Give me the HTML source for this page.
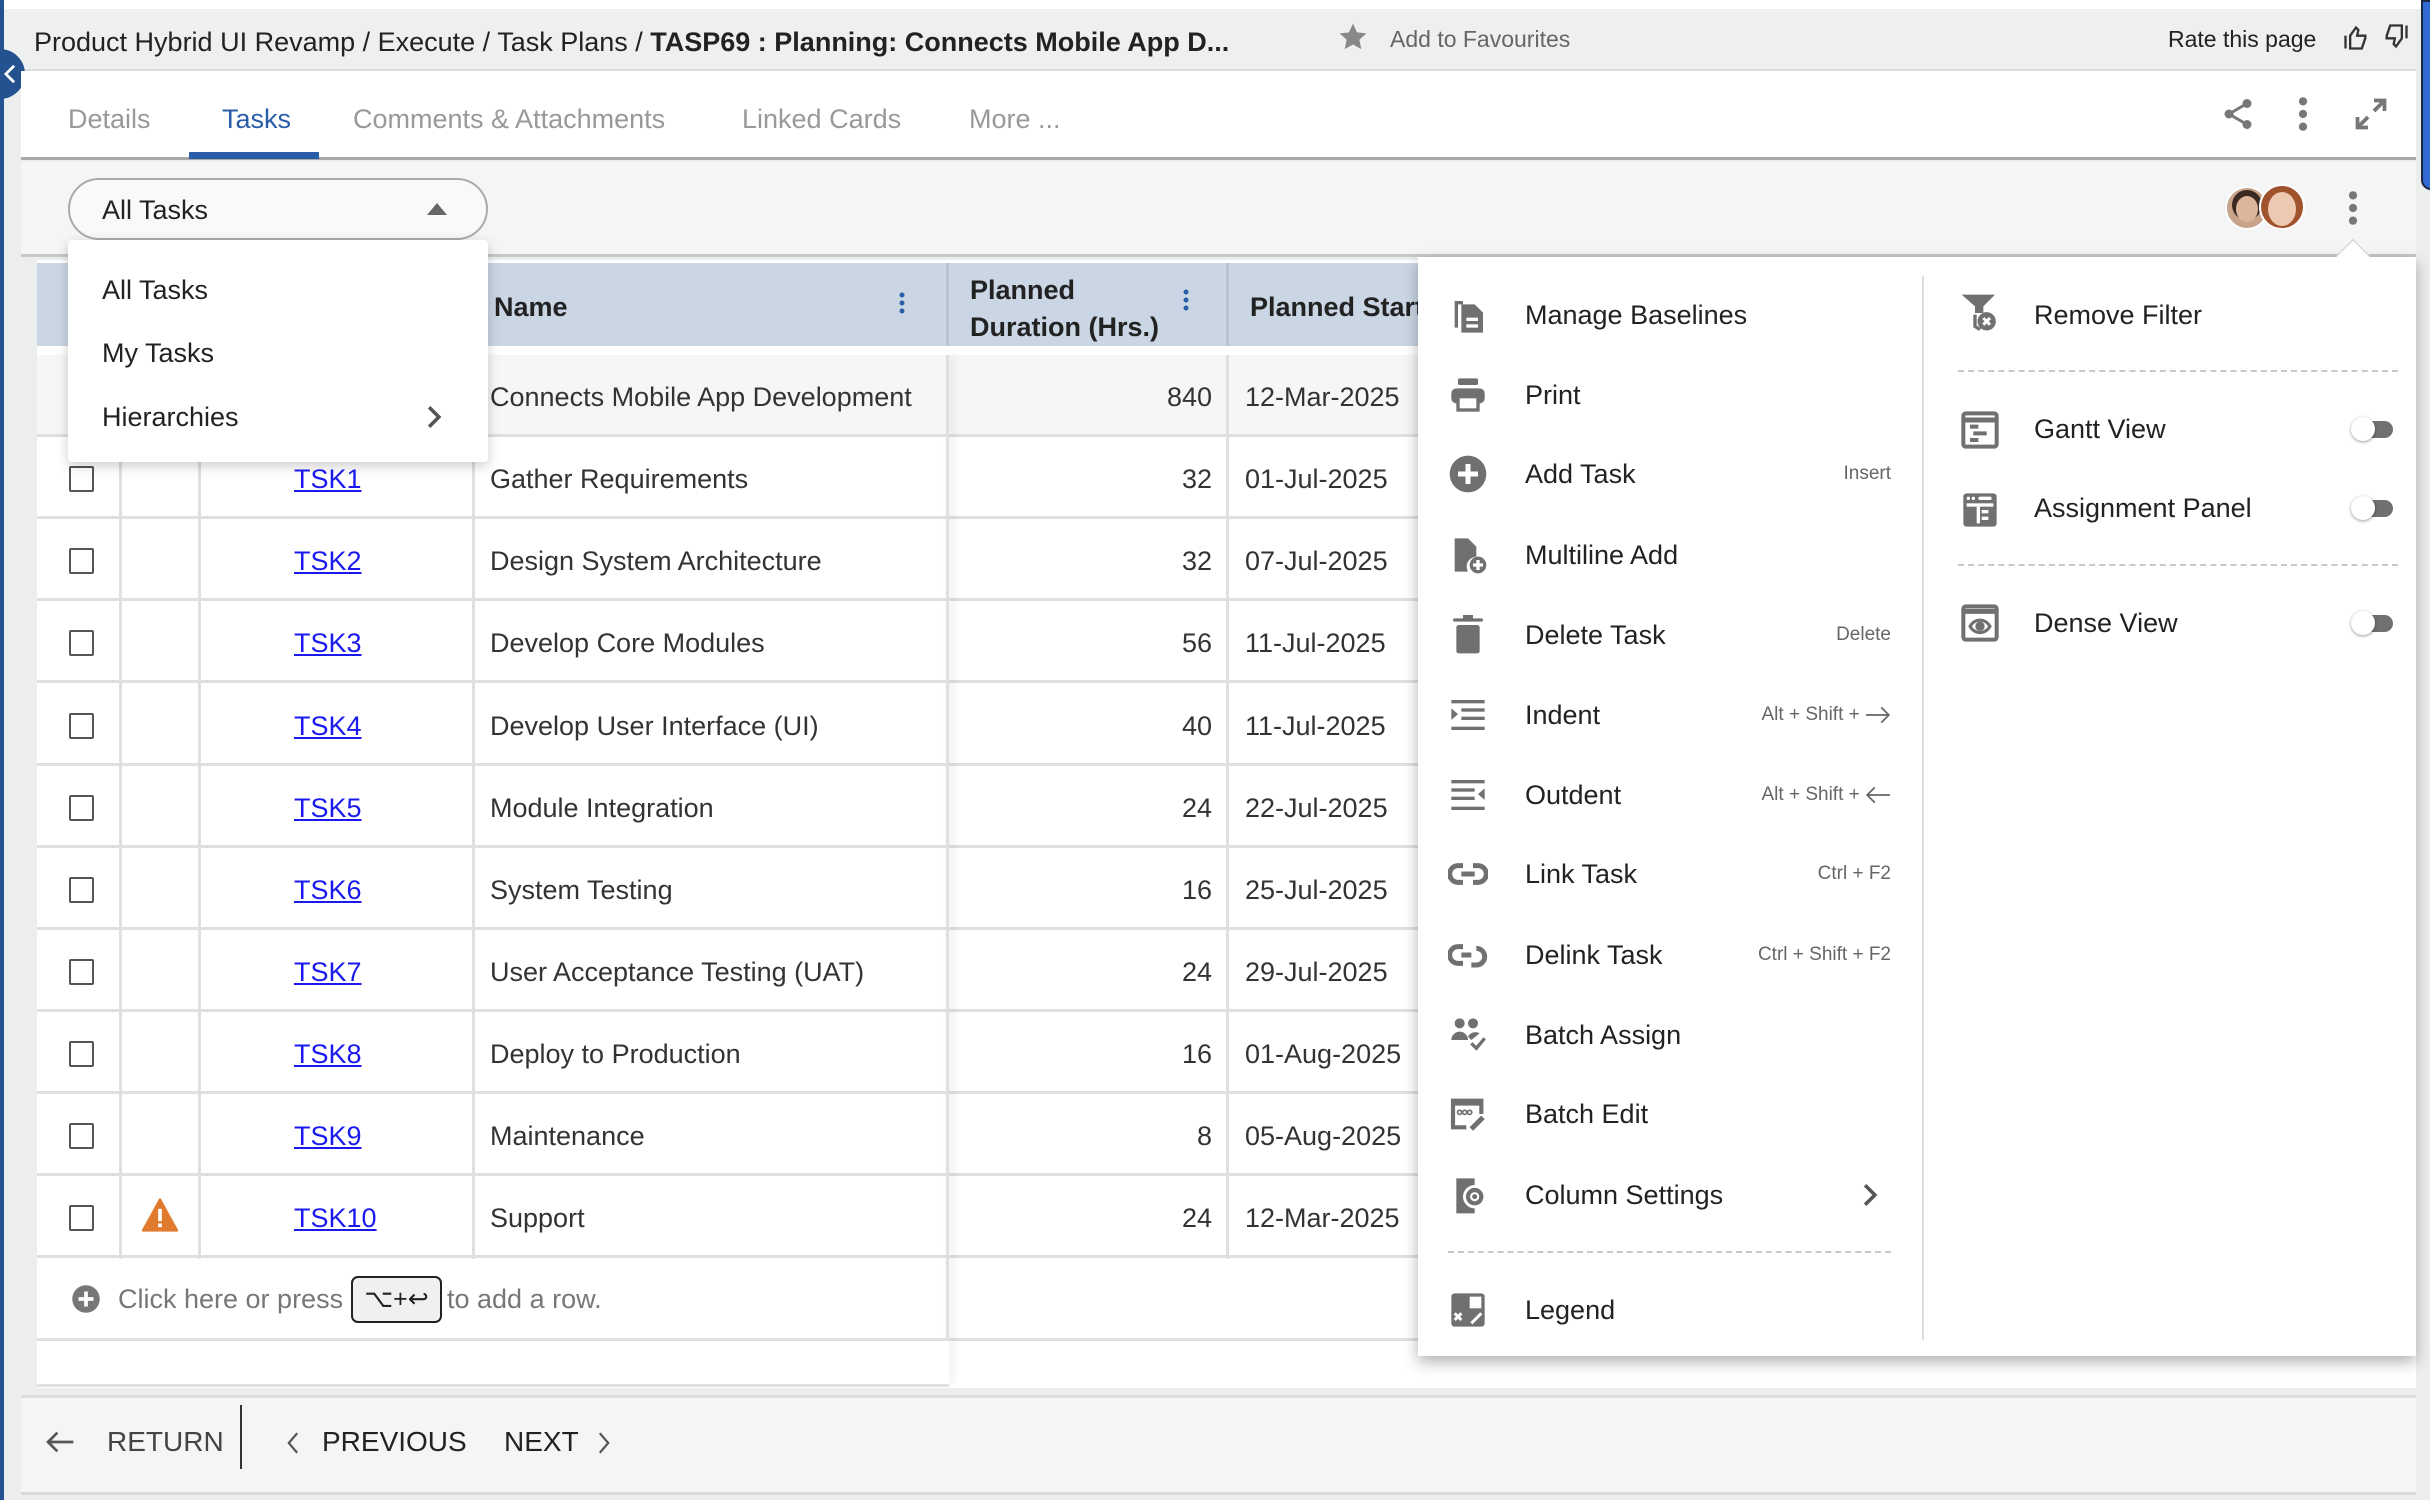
<!DOCTYPE html>
<html><head><meta charset="utf-8">
<style>
*{margin:0;padding:0;box-sizing:border-box}
body{width:2430px;height:1500px;position:relative;overflow:hidden;background:#eceeee;font-family:"Liberation Sans",sans-serif;color:#222}
.a{position:absolute}
.t{position:absolute;height:40px;line-height:40px;white-space:nowrap}
.row{position:absolute;left:37px;width:2379px;height:82px;border-bottom:3px solid #e0e0e3;background:#fff}
.cb{position:absolute;left:69px;width:25px;height:26px;border:2px solid #555;border-radius:2px;background:#fff}
.lk{color:#1a1aee;text-decoration:underline;font-size:27px}
.mi{position:absolute;font-size:27px;color:#222;height:40px;line-height:40px}
.sc{position:absolute;font-size:19px;color:#666;right:0;height:40px;line-height:40px;text-align:right;white-space:nowrap}
.sc svg{vertical-align:middle}
.ic{position:absolute;width:40px;height:40px}
.tg{position:absolute;width:42px;height:20px}
.tg:before{content:"";position:absolute;left:10px;top:2px;width:32px;height:17px;border-radius:9px;background:#707070}
.tg:after{content:"";position:absolute;left:0;top:-2px;width:24px;height:24px;border-radius:50%;background:#fff;box-shadow:0 1px 3px rgba(0,0,0,.4)}
.dash{position:absolute;height:0;border-top:2px dashed #c8c8c8}
</style></head><body>
<div class="a" style="left:0;top:0;width:2430px;height:9px;background:#fff"></div>
<div class="a" style="left:0;top:0;width:4px;height:1500px;background:#24518f"></div>
<div class="a" style="left:2421px;top:0;width:20px;height:190px;background:#2f6bd0;border:2px solid #1a2a44;border-radius:0 0 0 10px"></div>
<div class="a" style="left:4px;top:9px;width:2412px;height:62px;background:#eef0ef;border-bottom:2px solid #dcdcdc"></div>
<div class="t" style="left:34px;top:22px;font-size:27px;color:#222">Product Hybrid UI Revamp / Execute / Task Plans / <b>TASP69 : Planning: Connects Mobile App D...</b></div>
<svg class="a" style="left:1337px;top:21px" width="32" height="32" viewBox="0 0 24 24"><path d="M12 2l3 6.5 7 .8-5.2 4.8 1.4 7L12 17.6 5.8 21.1l1.4-7L2 9.3l7-.8z" fill="#888"/></svg>
<div class="t" style="left:1390px;top:19px;font-size:23px;color:#666">Add to Favourites</div>
<div class="t" style="left:2168px;top:19px;font-size:23px;color:#222">Rate this page</div>
<svg class="a" style="left:2342px;top:24px" width="28" height="28" viewBox="0 0 24 24" fill="none" stroke="#333" stroke-width="2"><path d="M3 10v11M7 21h10l3-9v-2h-7l1-5-2-2-5 7v11z"/></svg>
<svg class="a" style="left:2382px;top:22px" width="28" height="28" viewBox="0 0 24 24" fill="none" stroke="#333" stroke-width="2"><path d="M21 3v11M17 3H7L4 12v2h7l-1 5 2 2 5-7V3z"/></svg>
<div class="a" style="left:-25px;top:49px;width:50px;height:50px;border-radius:50%;background:#24518f"></div>
<svg class="a" style="left:3px;top:63px" width="14" height="22" viewBox="0 0 10 16" fill="none" stroke="#fff" stroke-width="2"><path d="M8 2L2 8l6 6"/></svg>
<div class="a" style="left:21px;top:71px;width:2395px;height:89px;background:#fff;border-bottom:3px solid #a8a8a8"></div>
<div class="t" style="left:68px;top:99px;font-size:27px;color:#999">Details</div>
<div class="t" style="left:222px;top:99px;font-size:27px;color:#2a5da8">Tasks</div>
<div class="a" style="left:189px;top:152px;width:130px;height:7px;background:#2a5da8"></div>
<div class="t" style="left:353px;top:99px;font-size:27px;color:#999">Comments &amp; Attachments</div>
<div class="t" style="left:742px;top:99px;font-size:27px;color:#999">Linked Cards</div>
<div class="t" style="left:969px;top:99px;font-size:27px;color:#999">More ...</div>
<svg class="a" style="left:2220px;top:96px" width="36" height="36" viewBox="0 0 24 24" fill="#777"><circle cx="18" cy="5" r="3"/><circle cx="6" cy="12" r="3"/><circle cx="18" cy="19" r="3"/><path d="M6 12L18 5M6 12l12 7" stroke="#777" stroke-width="2"/></svg>
<svg class="a" style="left:2293px;top:95px" width="20" height="38" viewBox="0 0 10 24" fill="#777"><circle cx="5" cy="4" r="2.6"/><circle cx="5" cy="12" r="2.6"/><circle cx="5" cy="20" r="2.6"/></svg>
<svg class="a" style="left:2353px;top:96px" width="36" height="36" viewBox="0 0 24 24" fill="none" stroke="#777" stroke-width="2.5"><path d="M14 3h7v7M21 3l-7 7M10 21H3v-7M3 21l7-7"/></svg>
<div class="a" style="left:21px;top:162px;width:2395px;height:95px;background:#f5f5f5;border-bottom:3px solid #c8c8c8"></div>
<div class="a" style="left:68px;top:178px;width:420px;height:62px;border:2px solid #aaa;border-radius:31px;background:#f8f9fa"></div>
<div class="t" style="left:102px;top:190px;font-size:27px;color:#222">All Tasks</div>
<div class="a" style="left:427px;top:203px;width:0;height:0;border-left:10px solid transparent;border-right:10px solid transparent;border-bottom:12px solid #666"></div>
<div class="a" style="left:2225px;top:186px;width:44px;height:44px;border-radius:50%;background:#c9a38a;border:2px solid #fff"></div>
<div class="a" style="left:2232px;top:190px;width:30px;height:30px;border-radius:50%;background:#3b2a22"></div>
<div class="a" style="left:2236px;top:196px;width:22px;height:26px;border-radius:50%;background:#dcb59a"></div>
<div class="a" style="left:2259px;top:184px;width:46px;height:46px;border-radius:50%;background:#a0522d;border:2px solid #fff"></div>
<div class="a" style="left:2268px;top:192px;width:28px;height:34px;border-radius:50%;background:#ecc9b0"></div>
<svg class="a" style="left:2343px;top:189px" width="20" height="38" viewBox="0 0 10 24" fill="#777"><circle cx="5" cy="4" r="2.6"/><circle cx="5" cy="12" r="2.6"/><circle cx="5" cy="20" r="2.6"/></svg>
<div class="a" style="left:37px;top:260px;width:2379px;height:1128px;background:#fff"></div>
<div class="a" style="left:37px;top:263px;width:1381px;height:83px;background:#cad6e4"></div>
<div class="a" style="left:946px;top:263px;width:3px;height:83px;background:#b8c4d2"></div>
<div class="a" style="left:1226px;top:263px;width:3px;height:83px;background:#b8c4d2"></div>
<div class="t" style="left:494px;top:287px;font-size:27px;font-weight:bold;color:#222">Name</div>
<svg class="a" style="left:897px;top:290px" width="10" height="26" viewBox="0 0 10 24" fill="#2a5da8"><circle cx="5" cy="4" r="2.5"/><circle cx="5" cy="12" r="2.5"/><circle cx="5" cy="20" r="2.5"/></svg>
<div class="a" style="left:970px;top:272px;font-size:27px;font-weight:bold;line-height:37px;color:#222">Planned<br>Duration (Hrs.)</div>
<svg class="a" style="left:1181px;top:287px" width="10" height="26" viewBox="0 0 10 24" fill="#2a5da8"><circle cx="5" cy="4" r="2.5"/><circle cx="5" cy="12" r="2.5"/><circle cx="5" cy="20" r="2.5"/></svg>
<div class="t" style="left:1250px;top:287px;font-size:27px;font-weight:bold;color:#222">Planned Start</div>
<div class="row" style="top:355px;background:#f7f6f6"></div>
<div class="t" style="left:490px;top:377px;font-size:27px;color:#333">Connects Mobile App Development</div>
<div class="t" style="left:1100px;top:377px;width:112px;text-align:right;font-size:27px;color:#333">840</div>
<div class="t" style="left:1245px;top:377px;font-size:27px;color:#333">12-Mar-2025</div>
<div class="row" style="top:437px"></div>
<div class="row" style="top:519px"></div>
<div class="row" style="top:601px"></div>
<div class="row" style="top:684px"></div>
<div class="row" style="top:766px"></div>
<div class="row" style="top:848px"></div>
<div class="row" style="top:930px"></div>
<div class="row" style="top:1012px"></div>
<div class="row" style="top:1094px"></div>
<div class="row" style="top:1176px"></div>
<div class="row" style="top:1259px;height:82px"></div>
<div class="a" style="left:119px;top:437px;width:3px;height:822px;background:#e0e0e3"></div>
<div class="a" style="left:198px;top:437px;width:3px;height:822px;background:#e0e0e3"></div>
<div class="a" style="left:472px;top:355px;width:3px;height:904px;background:#e0e0e3"></div>
<div class="a" style="left:946px;top:355px;width:3px;height:1030px;background:#e0e0e3;box-shadow:4px 0 8px rgba(0,0,0,.12)"></div>
<div class="a" style="left:1226px;top:355px;width:3px;height:904px;background:#e0e0e3"></div>
<div class="a" style="left:37px;top:1341px;width:912px;height:46px;background:#fff;border-bottom:3px solid #e0e0e3"></div>
<div class="cb" style="top:466px"></div><div class="t" style="left:294px;top:459px"><span class="lk">TSK1</span></div><div class="t" style="left:490px;top:459px;font-size:27px;color:#333">Gather Requirements</div><div class="t" style="left:1100px;top:459px;width:112px;text-align:right;font-size:27px;color:#333">32</div><div class="t" style="left:1245px;top:459px;font-size:27px;color:#333">01-Jul-2025</div>
<div class="cb" style="top:548px"></div><div class="t" style="left:294px;top:541px"><span class="lk">TSK2</span></div><div class="t" style="left:490px;top:541px;font-size:27px;color:#333">Design System Architecture</div><div class="t" style="left:1100px;top:541px;width:112px;text-align:right;font-size:27px;color:#333">32</div><div class="t" style="left:1245px;top:541px;font-size:27px;color:#333">07-Jul-2025</div>
<div class="cb" style="top:630px"></div><div class="t" style="left:294px;top:623px"><span class="lk">TSK3</span></div><div class="t" style="left:490px;top:623px;font-size:27px;color:#333">Develop Core Modules</div><div class="t" style="left:1100px;top:623px;width:112px;text-align:right;font-size:27px;color:#333">56</div><div class="t" style="left:1245px;top:623px;font-size:27px;color:#333">11-Jul-2025</div>
<div class="cb" style="top:713px"></div><div class="t" style="left:294px;top:706px"><span class="lk">TSK4</span></div><div class="t" style="left:490px;top:706px;font-size:27px;color:#333">Develop User Interface (UI)</div><div class="t" style="left:1100px;top:706px;width:112px;text-align:right;font-size:27px;color:#333">40</div><div class="t" style="left:1245px;top:706px;font-size:27px;color:#333">11-Jul-2025</div>
<div class="cb" style="top:795px"></div><div class="t" style="left:294px;top:788px"><span class="lk">TSK5</span></div><div class="t" style="left:490px;top:788px;font-size:27px;color:#333">Module Integration</div><div class="t" style="left:1100px;top:788px;width:112px;text-align:right;font-size:27px;color:#333">24</div><div class="t" style="left:1245px;top:788px;font-size:27px;color:#333">22-Jul-2025</div>
<div class="cb" style="top:877px"></div><div class="t" style="left:294px;top:870px"><span class="lk">TSK6</span></div><div class="t" style="left:490px;top:870px;font-size:27px;color:#333">System Testing</div><div class="t" style="left:1100px;top:870px;width:112px;text-align:right;font-size:27px;color:#333">16</div><div class="t" style="left:1245px;top:870px;font-size:27px;color:#333">25-Jul-2025</div>
<div class="cb" style="top:959px"></div><div class="t" style="left:294px;top:952px"><span class="lk">TSK7</span></div><div class="t" style="left:490px;top:952px;font-size:27px;color:#333">User Acceptance Testing (UAT)</div><div class="t" style="left:1100px;top:952px;width:112px;text-align:right;font-size:27px;color:#333">24</div><div class="t" style="left:1245px;top:952px;font-size:27px;color:#333">29-Jul-2025</div>
<div class="cb" style="top:1041px"></div><div class="t" style="left:294px;top:1034px"><span class="lk">TSK8</span></div><div class="t" style="left:490px;top:1034px;font-size:27px;color:#333">Deploy to Production</div><div class="t" style="left:1100px;top:1034px;width:112px;text-align:right;font-size:27px;color:#333">16</div><div class="t" style="left:1245px;top:1034px;font-size:27px;color:#333">01-Aug-2025</div>
<div class="cb" style="top:1123px"></div><div class="t" style="left:294px;top:1116px"><span class="lk">TSK9</span></div><div class="t" style="left:490px;top:1116px;font-size:27px;color:#333">Maintenance</div><div class="t" style="left:1100px;top:1116px;width:112px;text-align:right;font-size:27px;color:#333">8</div><div class="t" style="left:1245px;top:1116px;font-size:27px;color:#333">05-Aug-2025</div>
<div class="cb" style="top:1205px"></div>
<svg class="a" style="left:141px;top:1198px" width="38" height="34" viewBox="0 0 24 22"><path d="M12 1L23 21H1z" fill="#e07a2e" stroke="#e07a2e" stroke-linejoin="round" stroke-width="1.5"/><rect x="10.8" y="7" width="2.4" height="8" fill="#fff"/><rect x="10.8" y="16.5" width="2.4" height="2.4" fill="#fff"/></svg>
<div class="t" style="left:294px;top:1198px"><span class="lk">TSK10</span></div><div class="t" style="left:490px;top:1198px;font-size:27px;color:#333">Support</div><div class="t" style="left:1100px;top:1198px;width:112px;text-align:right;font-size:27px;color:#333">24</div><div class="t" style="left:1245px;top:1198px;font-size:27px;color:#333">12-Mar-2025</div>
<svg class="a" style="left:71px;top:1284px" width="30" height="30" viewBox="0 0 24 24"><circle cx="12" cy="12" r="11" fill="#777"/><path d="M12 6v12M6 12h12" stroke="#fff" stroke-width="3"/></svg>
<div class="t" style="left:118px;top:1279px;font-size:27px;color:#777">Click here or press</div>
<div class="a" style="left:351px;top:1276px;width:91px;height:47px;border:2px solid #222;border-radius:7px;background:#f0f0f0;font-size:25px;line-height:43px;text-align:center;color:#222">&#8997;+&#8617;</div>
<div class="t" style="left:447px;top:1279px;font-size:27px;color:#777">to add a row.</div>
<div class="a" style="left:21px;top:1395px;width:2395px;height:100px;background:#f5f5f5;border-top:3px solid #ddd;border-bottom:3px solid #d8d8d8"></div>
<svg class="a" style="left:44px;top:1428px" width="32" height="28" viewBox="0 0 24 20" fill="none" stroke="#555" stroke-width="2"><path d="M22 10H3M10 3l-7 7 7 7"/></svg>
<div class="t" style="left:107px;top:1422px;font-size:28px;color:#444">RETURN</div>
<div class="a" style="left:240px;top:1405px;width:2px;height:64px;background:#333"></div>
<svg class="a" style="left:286px;top:1431px" width="14" height="24" viewBox="0 0 10 16" fill="none" stroke="#555" stroke-width="1.6"><path d="M8 1L2 8l6 7"/></svg>
<div class="t" style="left:322px;top:1422px;font-size:28px;color:#222">PREVIOUS</div>
<div class="t" style="left:504px;top:1422px;font-size:28px;color:#222">NEXT</div>
<svg class="a" style="left:597px;top:1431px" width="14" height="24" viewBox="0 0 10 16" fill="none" stroke="#555" stroke-width="1.6"><path d="M2 1l6 7-6 7"/></svg>
<div class="a" style="left:68px;top:240px;width:420px;height:222px;background:#fff;border-radius:4px;box-shadow:0 4px 12px rgba(0,0,0,.2)"></div>
<div class="t" style="left:102px;top:270px;font-size:27px;color:#222">All Tasks</div>
<div class="t" style="left:102px;top:333px;font-size:27px;color:#222">My Tasks</div>
<div class="t" style="left:102px;top:397px;font-size:27px;color:#222">Hierarchies</div>
<svg class="a" style="left:424px;top:404px" width="20" height="26" viewBox="0 0 10 16" fill="none" stroke="#555" stroke-width="2.2"><path d="M2 2l6 6-6 6"/></svg>
<div class="a" style="left:1418px;top:257px;width:998px;height:1099px;background:#fff;box-shadow:0 6px 14px rgba(0,0,0,.3)"></div>
<div class="a" style="left:2341px;top:244px;width:24px;height:24px;background:#fff;transform:rotate(45deg);border-left:1px solid #ccc;border-top:1px solid #ccc"></div>
<div class="a" style="left:1922px;top:276px;width:2px;height:1064px;background:#ddd"></div>
<div class="a" style="left:1448px;top:0;width:443px;height:1500px">
 <div class="mi" style="left:77px;top:295px">Manage Baselines</div>
 <div class="mi" style="left:77px;top:375px">Print</div>
 <div class="mi" style="left:77px;top:454px">Add Task</div><div class="sc" style="top:454px">Insert</div>
 <div class="mi" style="left:77px;top:535px">Multiline Add</div>
 <div class="mi" style="left:77px;top:615px">Delete Task</div><div class="sc" style="top:615px">Delete</div>
 <div class="mi" style="left:77px;top:695px">Indent</div><div class="sc" style="top:695px">Alt + Shift + <svg width="26" height="18" viewBox="0 0 24 16" fill="none" stroke="#666" stroke-width="1.6"><path d="M1 8h21M15 1l7 7-7 7"/></svg></div>
 <div class="mi" style="left:77px;top:775px">Outdent</div><div class="sc" style="top:775px">Alt + Shift + <svg width="26" height="18" viewBox="0 0 24 16" fill="none" stroke="#666" stroke-width="1.6"><path d="M23 8H2M9 1L2 8l7 7"/></svg></div>
 <div class="mi" style="left:77px;top:854px">Link Task</div><div class="sc" style="top:854px">Ctrl + F2</div>
 <div class="mi" style="left:77px;top:935px">Delink Task</div><div class="sc" style="top:935px">Ctrl + Shift + F2</div>
 <div class="mi" style="left:77px;top:1015px">Batch Assign</div>
 <div class="mi" style="left:77px;top:1094px">Batch Edit</div>
 <div class="mi" style="left:77px;top:1175px">Column Settings</div>
 <svg class="a" style="left:412px;top:1182px" width="20" height="26" viewBox="0 0 10 16" fill="none" stroke="#555" stroke-width="2.2"><path d="M2 2l6 6-6 6"/></svg>
 <div class="dash" style="left:0;top:1251px;width:443px"></div>
 <div class="mi" style="left:77px;top:1290px">Legend</div>
 <svg class="ic" style="left:0;top:296px" viewBox="0 0 24 24" fill="#707070"><path d="M4 3h5v2H6v14H4z"/><path d="M8 5h8l5 5v12H8z"/><rect x="11" y="13" width="7" height="2" fill="#fff"/><rect x="11" y="17" width="7" height="2" fill="#fff"/></svg>
 <svg class="ic" style="left:0;top:375px" viewBox="0 0 24 24" fill="#707070"><rect x="6" y="2" width="12" height="4" rx="1"/><rect x="2" y="8" width="20" height="9" rx="3"/><rect x="6" y="13" width="12" height="8" fill="#fff" stroke="#707070" stroke-width="2"/></svg>
 <svg class="ic" style="left:0;top:454px" viewBox="0 0 24 24"><circle cx="12" cy="12" r="11" fill="#707070"/><path d="M12 6v12M6 12h12" stroke="#fff" stroke-width="3"/></svg>
 <svg class="ic" style="left:0;top:535px" viewBox="0 0 24 24" fill="#707070"><path d="M4 2h8l5 5v6a6 6 0 0 0-5 9H4z"/><circle cx="18" cy="18" r="5"/><path d="M18 15v6M15 18h6" stroke="#fff" stroke-width="2"/></svg>
 <svg class="ic" style="left:0;top:615px" viewBox="0 0 24 24" fill="#707070"><rect x="3" y="2" width="18" height="2" rx="1"/><rect x="9" y="0" width="6" height="3"/><rect x="5" y="6" width="14" height="17" rx="1.5"/></svg>
 <svg class="ic" style="left:0;top:695px" viewBox="0 0 24 24" fill="#707070"><rect x="2" y="3" width="20" height="2"/><rect x="8" y="8" width="14" height="2"/><rect x="8" y="13" width="14" height="2"/><rect x="2" y="19" width="20" height="2"/><path d="M2 8l4 3.5-4 3.5z"/></svg>
 <svg class="ic" style="left:0;top:775px" viewBox="0 0 24 24" fill="#707070"><rect x="2" y="3" width="20" height="2"/><rect x="2" y="8" width="14" height="2"/><rect x="2" y="13" width="14" height="2"/><rect x="2" y="19" width="20" height="2"/><path d="M22 8l-4 3.5 4 3.5z"/></svg>
 <svg class="ic" style="left:0;top:854px" viewBox="0 0 24 24" fill="none" stroke="#707070" stroke-width="3"><path d="M9 7H6a5 5 0 0 0 0 10h3M15 7h3a5 5 0 0 1 0 10h-3M8 12h8"/></svg>
 <svg class="ic" style="left:0;top:935px" viewBox="0 0 24 24" fill="none" stroke="#707070" stroke-width="3"><path d="M9 7H6a5 5 0 0 0 0 10h3M17 8a5 5 0 0 1 0 10h-3M8 12h6"/></svg>
 <svg class="ic" style="left:0;top:1015px" viewBox="0 0 24 24" fill="#707070"><circle cx="7" cy="5" r="3"/><circle cx="15" cy="5" r="3"/><path d="M2 15a5 5 0 0 1 10 0zM12 13a5 5 0 0 1 7-2l-5 4z"/><path d="M14 17l3 3 5-6" stroke="#707070" stroke-width="2" fill="none"/></svg>
 <svg class="ic" style="left:0;top:1094px" viewBox="0 0 24 24" fill="none" stroke="#707070" stroke-width="2.5"><path d="M11 20H3V4h17v8"/><path d="M3 5h17" stroke-width="4"/><path d="M14 21l7-7" stroke-width="3"/><circle cx="7" cy="11" r=".5"/><circle cx="10" cy="11" r=".5"/><circle cx="13" cy="11" r=".5"/></svg>
 <svg class="ic" style="left:0;top:1175px" viewBox="0 0 24 24" fill="#707070"><path d="M5 2h11v4a7 7 0 0 0 0 14v3H5z"/><circle cx="16" cy="13" r="4" fill="none" stroke="#707070" stroke-width="2.5"/><circle cx="16" cy="13" r="1.5"/></svg>
 <svg class="ic" style="left:0;top:1290px" viewBox="0 0 24 24"><rect x="2" y="2" width="20" height="20" rx="2" fill="#707070"/><rect x="13" y="4" width="7" height="7" fill="#fff"/><path d="M4 14l4 4M8 14l-4 4M14 20l6-6" stroke="#fff" stroke-width="1.8"/></svg>
</div>
<div class="a" style="left:1958px;top:0;width:440px;height:1500px">
 <div class="mi" style="left:76px;top:295px">Remove Filter</div>
 <div class="dash" style="left:0;top:370px;width:440px"></div>
 <div class="mi" style="left:76px;top:409px">Gantt View</div>
 <div class="mi" style="left:76px;top:488px">Assignment Panel</div>
 <div class="dash" style="left:0;top:564px;width:440px"></div>
 <div class="mi" style="left:76px;top:603px">Dense View</div>
 <div class="tg" style="left:393px;top:419px"></div>
 <div class="tg" style="left:393px;top:498px"></div>
 <div class="tg" style="left:393px;top:613px"></div>
 <svg class="ic" style="left:2px;top:293px" viewBox="0 0 24 24" fill="#707070"><path d="M1 1h20l-7 7v4h-5V8z"/><circle cx="16" cy="17" r="5.5"/><path d="M14 15l4 4M18 15l-4 4" stroke="#fff" stroke-width="1.8"/><path d="M9 13v7l3 2" stroke="#707070" stroke-width="2" fill="none"/></svg>
 <svg class="ic" style="left:2px;top:410px" viewBox="0 0 24 24" fill="none" stroke="#707070" stroke-width="2.4"><rect x="2" y="2" width="20" height="20" rx="1.5"/><path d="M2 6h20" stroke-width="3"/><path d="M6 10h5M8 14h8M6 18h5"/></svg>
 <svg class="ic" style="left:2px;top:490px" viewBox="0 0 24 24" fill="#707070"><rect x="2" y="2" width="20" height="20" rx="2"/><rect x="4" y="8" width="16" height="2" fill="#fff"/><circle cx="5" cy="5" r="1" fill="#fff"/><circle cx="8" cy="5" r="1" fill="#fff"/><rect x="11" y="4" width="8" height="2" rx="1" fill="#fff"/><rect x="10" y="10" width="2" height="10" fill="#fff"/><rect x="13" y="12" width="4" height="2" fill="#fff"/><rect x="13" y="16" width="4" height="2" fill="#fff"/></svg>
 <svg class="ic" style="left:2px;top:603px" viewBox="0 0 24 24" fill="none" stroke="#707070" stroke-width="2.4"><rect x="2" y="2" width="20" height="20" rx="1.5"/><path d="M2 5h20" stroke-width="3"/><path d="M6 14c3-5 9-5 12 0c-3 5-9 5-12 0z" stroke-width="1.8"/><circle cx="12" cy="14" r="1.6" fill="#707070"/></svg>
</div>
</body></html>
